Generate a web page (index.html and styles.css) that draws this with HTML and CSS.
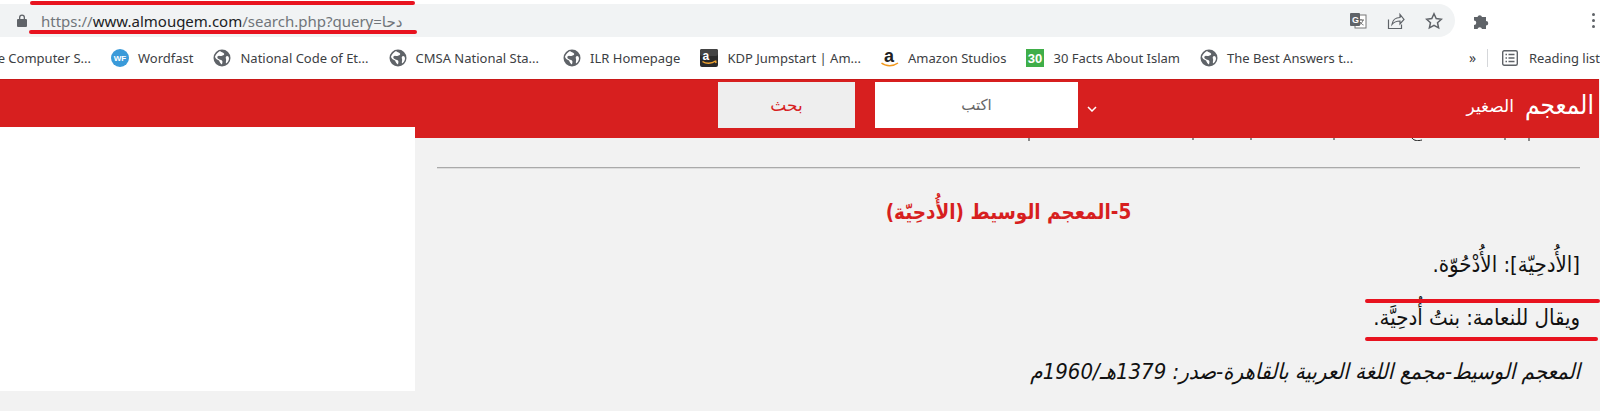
FILE: index.html
```html
<!DOCTYPE html>
<html lang="ar">
<head>
    <meta charset="UTF-8">
    <meta name="viewport" content="width=device-width, initial-scale=1.0">
    <title>المعجم</title>
    <link rel="stylesheet" href="styles.css">
</head>
<body>
    <div class="toolbar" dir="ltr">
        <div class="address-bar">
            <svg class="lock" viewBox="0 0 10 13"><path d="M2 5V3.500a3 3 0 0 1 6 0V5h1a1 1 0 0 1 1 1v6a1 1 0 0 1-1 1H1a1 1 0 0 1-1-1V6a1 1 0 0 1 1-1zm1.300 0h3.400V3.500a1.700 1.700 0 0 0-3.400 0z"/></svg>
            <div class="url">https://<span class="url-domain">www.almougem.com</span>/search.php?query=دحا</div>
            <div class="address-icons">
                <svg class="icon" viewBox="0 0 18 18"><rect x="6" y="3" width="11" height="13" fill="#fff" stroke="#777"/><rect x="1" y="1" width="10" height="13" rx="1" fill="#5f6368"/><text x="3" y="11" class="translate-g">G</text><path d="M10 8h5M12 7v1M14 8c-.5 2-2 4-3.500 5M11 10c1 1.500 2 2.500 3.500 3" fill="none" stroke="#666"/></svg>
                <svg class="icon" viewBox="0 0 18 18"><path d="M1.500 7.500v9h13v-4M5 12.500c.5-4 3.500-7 8-7V2.500l4 5-4 4.500V9c-3 0-6 1-8 3.500z" fill="none" stroke="#5f6368" stroke-width="1.200"/></svg>
                <svg class="icon" viewBox="0 0 18 18"><path d="M9 1.800l2.200 4.800 5.200.6-3.900 3.500 1.100 5.200L9 13.300l-4.600 2.600 1.100-5.200L1.600 7.200l5.200-.6z" fill="none" stroke="#5f6368" stroke-width="1.500"/></svg>
            </div>
        </div>
        <svg class="puzzle" viewBox="0 0 16 16"><path d="M1 4h3.500a2.300 2.300 0 0 1 4.500 0H13v4a2.200 2.200 0 0 1 0 4.500V16H9a2.300 2.300 0 0 0-4.500 0H1v-4a2.200 2.200 0 0 0 0-4.500z" fill="#5f6368"/></svg>
        <div class="dots"><span></span><span></span><span></span></div>
    </div>

    <div class="bookmarks" dir="ltr">
        <div class="bookmark bookmark-first">e Computer S...</div>
        <div class="bookmark">
            <svg class="fav" viewBox="0 0 18 18"><circle cx="9" cy="9" r="9" fill="#3a9ad9"/><text x="9" y="11.500" class="fav-wf">WF</text></svg>
            Wordfast
        </div>
        <div class="bookmark">
            <svg class="fav" viewBox="0 0 18 18"><use href="#globe"/></svg>
            National Code of Et...
        </div>
        <div class="bookmark bookmark-cmsa">
            <svg class="fav" viewBox="0 0 18 18"><use href="#globe"/></svg>
            CMSA National Sta...
        </div>
        <div class="bookmark">
            <svg class="fav" viewBox="0 0 18 18"><use href="#globe"/></svg>
            ILR Homepage
        </div>
        <div class="bookmark">
            <svg class="fav" viewBox="0 0 18 18"><rect width="18" height="18" rx="2" fill="#2b2b2b"/><rect width="18" height="7" rx="2" fill="#444"/><text x="2.500" y="10.500" class="fav-a">a</text><path d="M2.500 12.500c3.500 2.500 9 2.500 13-.5M15.500 11.500l.5 2.500" fill="none" stroke="#f3a530" stroke-width="1.500"/></svg>
            KDP Jumpstart | Am...
        </div>
        <div class="bookmark">
            <svg class="fav" viewBox="0 0 18 18"><text x="3" y="13" class="fav-a-dark">a</text><path d="M.5 14c4 3.500 12 3.500 16.500 0" fill="none" stroke="#f39a1e" stroke-width="1.500"/></svg>
            Amazon Studios
        </div>
        <div class="bookmark">
            <svg class="fav" viewBox="0 0 18 18"><rect width="18" height="18" fill="#3fae49"/><text x="9" y="13.500" class="fav-30">30</text></svg>
            30 Facts About Islam
        </div>
        <div class="bookmark">
            <svg class="fav" viewBox="0 0 18 18"><use href="#globe"/></svg>
            The Best Answers t...
        </div>
        <div class="bookmarks-end">
            <span class="more">»</span>
            <span class="separator"></span>
            <svg class="reading-icon" viewBox="0 0 16 16"><rect x=".7" y=".7" width="14.600" height="14.600" rx="1.500" fill="none" stroke="#5f6368" stroke-width="1.400"/><path d="M3.500 4.500h1.500M3.500 8h1.500M3.500 11.500h1.500M6.500 4.500h6M6.500 8h6M6.500 11.500h6" stroke="#5f6368" stroke-width="1.300"/></svg>
            <span class="reading-label">Reading list</span>
        </div>
    </div>

    <svg class="defs" aria-hidden="true"><defs>
        <g id="globe">
            <circle cx="9" cy="9" r="8.500" fill="#5f6368"/>
            <path d="M7 2c1 1.500 3 1 4 2.500S9 7 8 7 5.500 6 4.500 7.500 6 10.500 8 11s1.500 2.500 1 4.500C7.500 14.500 6.500 13 6 11.500 4 10.500 2 9.500 2 7.500 3 5 5 3 7 2zM14 7c1.500 0 2 1 2 3-.5 2-1.500 3.500-3 4.500-.5-2 .5-3 0-4.500S12.500 7.500 14 7z" fill="#fff"/>
        </g>
    </defs></svg>

    <div class="site">
        <header class="site-header" dir="ltr">
            <button class="search-button">بحث</button>
            <div class="search-input">اكتب</div>
            <svg class="chevron" viewBox="0 0 10 6"><path d="M1 1l4 4 4-4" fill="none" stroke="#fff" stroke-width="1.500"/></svg>
            <div class="logo">
                <span class="logo-small">الصغير</span>
                <span class="logo-big">المعجم</span>
            </div>
        </header>

        <div class="site-body" dir="ltr">
            <aside class="side-panel"></aside>
            <main class="content" dir="rtl">
                <!-- bottoms of the line hidden behind the header -->
                <svg class="scrolled-off" viewBox="0 0 1143 3" dir="ltr"><path d="M592 0v3M756 0v2M814 0v2M897 0v2M975 0c2 3 6 3 10 2M1068 0v2M1092 0v3"/></svg>
                <hr class="divider">
                <h2 class="entry-title">5-المعجم الوسيط (الأُدحِيّة)</h2>
                <p class="entry-text">[الأُدحِيّة]: الأُدْحُوّة.</p>
                <p class="entry-text">ويقال للنعامة: بنتُ أُدحِيَّة.</p>
                <p class="entry-source">المعجم الوسيط-مجمع اللغة العربية بالقاهرة-صدر: 1379هـ/1960م</p>
            </main>
        </div>
    </div>

    <!-- red marks drawn over the screenshot -->
    <span class="mark mark-url-top"></span>
    <span class="mark mark-url-bottom"></span>
    <span class="mark mark-text-top"></span>
    <span class="mark mark-text-bottom"></span>
</body>
</html>
```

FILE: styles.css
```css
* {
    box-sizing: border-box;
}
body {
    margin: 0;
    height: 411px;
    overflow: hidden;
    position: relative;
    background-color: #f2f2f2;
    font-family: "Liberation Sans", "DejaVu Sans", sans-serif;
}
.defs {
    display: none;
}

/* browser chrome */
.toolbar {
    height: 37px;
    padding-top: 4px;
    background-color: #fff;
    display: flex;
    align-items: center;
}
.address-bar {
    width: 1455px;
    height: 33px;
    flex-shrink: 0;
    background-color: #f1f3f4;
    border-radius: 0 17px 17px 0;
    display: flex;
    align-items: center;
    padding-left: 17px;
    padding-right: 12px;
}
.lock {
    width: 10px;
    height: 13px;
    fill: #5f6368;
    margin-right: 14px;
}
.url {
    font-family: "Noto Sans", "DejaVu Sans", sans-serif;
    font-size: 15px;
    color: #70757a;
}
.url-domain {
    color: #202124;
}
.address-icons {
    margin-left: auto;
    display: flex;
    gap: 20px;
}
.icon {
    width: 18px;
    height: 18px;
}
.translate-g {
    font: bold 9px "Liberation Sans", sans-serif;
    fill: #fff;
}
.puzzle {
    width: 16px;
    height: 16px;
    margin-left: 18px;
    flex-shrink: 0;
}
.dots {
    margin-left: 103px;
    display: flex;
    flex-direction: column;
    gap: 3px;
    flex-shrink: 0;
}
.dots span {
    width: 3px;
    height: 3px;
    border-radius: 50%;
    background-color: #5f6368;
}

.bookmarks {
    height: 42px;
    background-color: #fff;
    display: flex;
    align-items: center;
    gap: 20px;
    padding-bottom: 1px;
    font-family: "Noto Sans", "DejaVu Sans", sans-serif;
    font-size: 13px;
    color: #3c4043;
    white-space: nowrap;
    overflow: hidden;
}
.bookmark {
    display: flex;
    align-items: center;
    gap: 9px;
    flex-shrink: 0;
}
.bookmark-first {
    margin-left: -3px;
    width: 94px;
    justify-content: flex-end;
}
.bookmark-cmsa {
    padding-right: 4px;
}
.fav {
    width: 18px;
    height: 18px;
    flex-shrink: 0;
}
.fav-wf {
    font: bold 8px "Liberation Sans", sans-serif;
    fill: #fff;
    text-anchor: middle;
}
.fav-a {
    font: bold 12px "Liberation Sans", sans-serif;
    fill: #fff;
}
.fav-a-dark {
    font: bold 18px "Liberation Sans", sans-serif;
    fill: #222;
}
.fav-30 {
    font: bold 13px "Liberation Sans", sans-serif;
    fill: #fff;
    text-anchor: middle;
}
.bookmarks-end {
    margin-left: auto;
    display: flex;
    align-items: center;
    flex-shrink: 0;
    width: 131px;
}
.more {
    font-size: 14px;
    width: 20px;
}
.separator {
    width: 1px;
    height: 18px;
    background-color: #d5d7da;
    margin-right: 14px;
}
.reading-icon {
    width: 16px;
    height: 16px;
    margin-right: 11px;
    flex-shrink: 0;
}

/* page */
.site-header {
    height: 59px;
    background-color: #d71f1f;
    border-top: 1px solid #c91818;
    margin-right: 1px;
    padding-top: 2px;
    display: flex;
    align-items: flex-start;
    justify-content: flex-end;
    position: relative;
    z-index: 1;
}
.search-button {
    width: 137px;
    height: 46px;
    background-color: #eee;
    color: #d71f1f;
    border: none;
    font-family: "Liberation Sans", "DejaVu Sans", sans-serif;
    font-size: 17px;
    margin-right: 20px;
}
.search-input {
    width: 203px;
    height: 46px;
    background-color: #fff;
    color: #666;
    font-size: 15px;
    display: flex;
    align-items: center;
    justify-content: center;
    margin-right: 9px;
}
.chevron {
    width: 10px;
    height: 6px;
    margin-top: 24px;
    margin-right: 375px;
}
.logo {
    display: flex;
    align-items: center;
    gap: 11px;
    height: 46px;
    color: #fff;
    padding-right: 5px;
    width: 127px;
    justify-content: flex-end;
    white-space: nowrap;
}
.logo-small {
    font-size: 17px;
    margin-top: 2px;
}
.logo-big {
    font-size: 26px;
    font-family: "DejaVu Sans Condensed", "DejaVu Sans", sans-serif;
}
.site-body {
    display: flex;
}
.side-panel {
    width: 415px;
    height: 264px;
    margin-top: -11px;
    background-color: #fff;
    position: relative;
    z-index: 2;
    flex-shrink: 0;
}
.content {
    flex: 1;
    padding: 0 20px 0 22px;
    font-family: "DejaVu Sans Condensed", "DejaVu Sans", sans-serif;
}
.scrolled-off {
    display: block;
    width: 100%;
    height: 3px;
    fill: none;
    stroke: #222;
}
.divider {
    margin: 26px 0 0;
    border: none;
    border-top: 1px solid #aaa;
    border-bottom: 1px solid #ddd;
}
.entry-title {
    margin: 28px 0 0;
    text-align: center;
    color: #d71f1f;
    font-size: 20.500px;
    font-weight: bold;
    line-height: 30px;
}
.entry-text {
    margin: 22px 0 0;
    font-size: 22px;
    line-height: 32px;
    color: #111;
}
.entry-text + .entry-text {
    margin-top: 21px;
}
.entry-source {
    margin: 23px 0 0;
    font-size: 22px;
    line-height: 30px;
    font-style: italic;
    color: #111;
}

/* annotation strokes */
.mark {
    position: absolute;
    background-color: #e8131f;
    border-radius: 2px;
    z-index: 3;
}
.mark-url-top {
    left: 30px;
    top: 1px;
    width: 385px;
    height: 4px;
}
.mark-url-bottom {
    left: 29px;
    top: 30px;
    width: 388px;
    height: 4px;
}
.mark-text-top {
    left: 1365px;
    top: 299px;
    width: 235px;
    height: 4px;
}
.mark-text-bottom {
    left: 1365px;
    top: 337px;
    width: 233px;
    height: 4px;
}
```
